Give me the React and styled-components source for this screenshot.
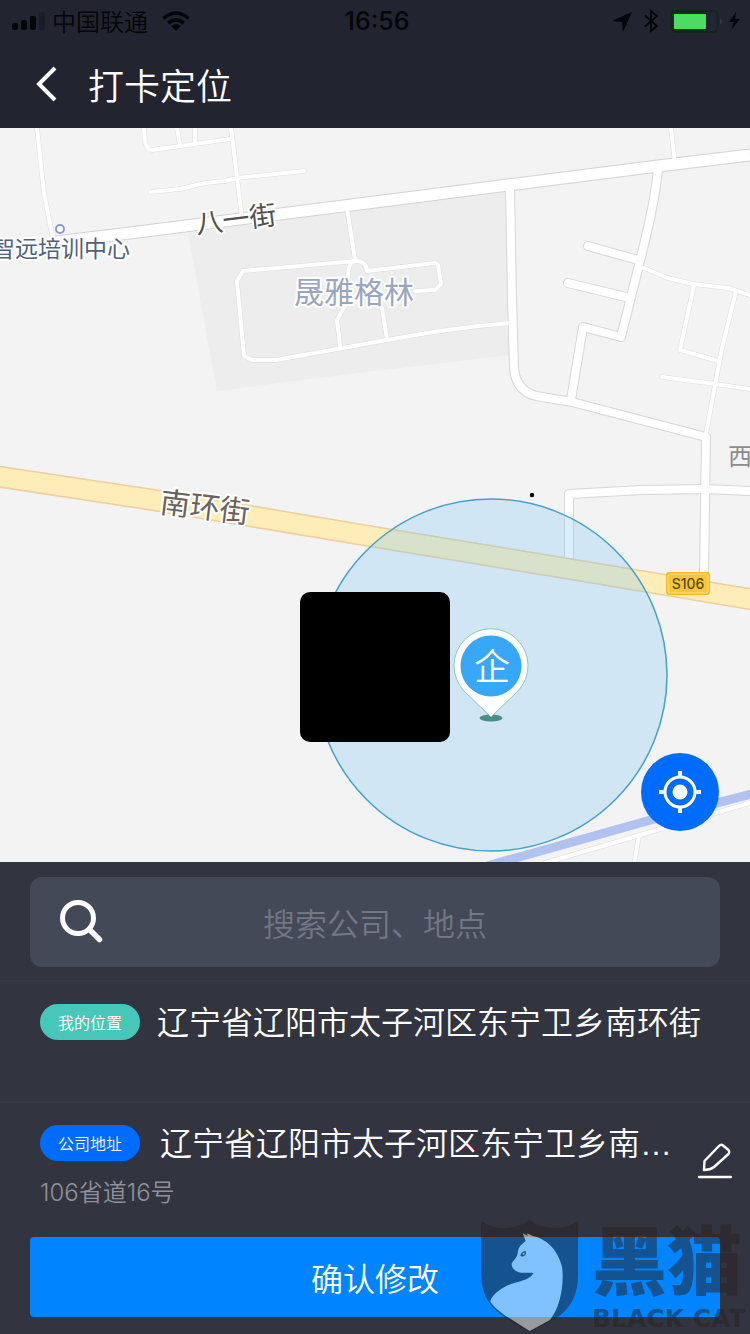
import React from "react";
import styled, { createGlobalStyle } from "styled-components";

const GlobalStyle = createGlobalStyle`
  * { box-sizing: border-box; }
  body {
    margin: 0;
    background: #323440;
    color: #fff;
    font-family: "Noto Sans CJK SC", sans-serif;
    font-weight: 350;
  }
  button, input { font: inherit; color: inherit; }
`;

const Page = styled.div`
  position: relative;
  display: flex;
  flex-direction: column;
  min-height: 100vh;
  overflow: hidden;
`;

const Header = styled.header`
  background: #22242f;
`;

const StatusBar = styled.div`
  display: grid;
  grid-template-columns: 1fr auto 1fr;
  align-items: center;
  height: 40px;
  padding: 0 8px 0 12px;
  color: #05060a;
`;

const StatusGroup = styled.div`
  display: flex;
  align-items: center;
  justify-content: ${(p) => (p.$end ? "flex-end" : "flex-start")};
  gap: 6px;
`;

const Carrier = styled.span`
  font-size: 24px;
  line-height: 40px;
  margin-right: 8px;
`;

const Time = styled.time`
  font-family: Inter, sans-serif;
  font-size: 25px;
  font-weight: 500;
  line-height: 42px;
`;

const NavBar = styled.nav`
  display: flex;
  align-items: center;
  gap: 28px;
  height: 88px;
  padding: 0 34px;
`;

const IconButton = styled.button`
  display: flex;
  padding: 0;
  border: 0;
  background: none;
  cursor: pointer;
`;

const Title = styled.h1`
  margin: 0;
  font-size: 36px;
  line-height: 52px;
  font-weight: 350;
`;

const MapArea = styled.main`
  position: relative;
  background: #f3f3f3;
  overflow: hidden;
`;

const MapCanvas = styled.svg`
  display: block;
  width: 100%;
  height: auto;
`;

const LocateButton = styled.button`
  position: absolute;
  right: 31px;
  bottom: 31px;
  display: flex;
  align-items: center;
  justify-content: center;
  width: 78px;
  height: 78px;
  padding: 0;
  border: 0;
  border-radius: 50%;
  background: #006cff;
  cursor: pointer;
`;

const SearchSection = styled.form`
  padding: 15px 30px 13px;
`;

const SearchField = styled.label`
  display: flex;
  align-items: center;
  height: 90px;
  padding: 0 30px;
  border-radius: 12px;
  background: #434956;
`;

const SearchInput = styled.input`
  flex: 1;
  min-width: 0;
  height: 60px;
  margin-right: 44px;
  padding: 0;
  border: 0;
  outline: 0;
  background: none;
  font-size: 32px;
  text-align: center;
  &::placeholder { color: #737783; opacity: 1; }
`;

const LocationRow = styled.section`
  display: flex;
  align-items: center;
  height: 121px;
  padding: 0 18px 0 40px;
  border-top: 2px solid #363943;
`;

const LocationBody = styled.div`
  flex: 1;
  min-width: 0;
  height: 84px;
`;

const LocationLine = styled.div`
  display: flex;
  align-items: center;
  gap: ${(p) => p.$gap}px;
  height: 44px;
`;

const Badge = styled.span`
  flex: none;
  width: 100px;
  height: 36px;
  border-radius: 18px;
  background: ${(p) => p.$color};
  font-size: 16px;
  line-height: 36px;
  text-align: center;
`;

const Address = styled.span`
  min-width: 0;
  height: 44px;
  overflow: hidden;
  font-family: "Liberation Sans", "Noto Sans CJK SC", sans-serif;
  font-size: 32px;
  line-height: 46px;
  white-space: nowrap;
  text-overflow: ellipsis;
`;

const Detail = styled.p`
  margin: 10px 0 0;
  color: #90929a;
  font-family: Inter, "Noto Sans CJK SC", sans-serif;
  font-size: 24px;
  line-height: 36px;
`;

const EditButton = styled(IconButton)`
  align-self: flex-end;
  margin: 0 0 43px 24px;
`;

const Actions = styled.footer`
  padding: 15px 30px 17px;
`;

const ConfirmButton = styled.button`
  display: block;
  width: 100%;
  height: 80px;
  padding: 0;
  border: 0;
  border-radius: 4px;
  background: #0084ff;
  font-size: 32px;
  cursor: pointer;
`;

const Watermark = styled.div`
  position: absolute;
  right: 0;
  bottom: 2px;
  display: flex;
  align-items: flex-end;
  gap: 14px;
  pointer-events: none;
`;

const WatermarkText = styled.div`
  width: 158px;
  color: rgba(40, 32, 33, 0.5);
  white-space: nowrap;
`;

const WatermarkName = styled.div`
  font-size: 75px;
  font-weight: 900;
  line-height: 98px;
`;

const WatermarkLatin = styled.div`
  font-family: "DejaVu Sans", sans-serif;
  font-size: 25px;
  font-weight: 700;
  line-height: 26px;
`;

const MapLabel = styled.text`
  font-size: ${(p) => p.$size}px;
  font-weight: ${(p) => p.$weight || 400};
  fill: ${(p) => p.$color};
  stroke: ${(p) => (p.$halo ? "#fff" : "none")};
  stroke-width: 4px;
  stroke-linejoin: round;
  paint-order: stroke;
  text-anchor: middle;
`;

const RouteNumber = styled(MapLabel)`
  font-family: Inter, sans-serif;
`;

const lanes = [
  "M37 0 L44 65 L52 106",
  "M144 0 L145 14 Q147 22 152 22 L230 11",
  "M177 0 L180 17",
  "M195 0 L195 15",
  "M231 0 L242 90",
  "M150 64 L180 61 L205 55 L225 53 L237 50 L304 43",
  "M347 80 L355 132",
  "M348 150 Q348 133 356 133 Q366 133 367 143 L435 135 L438 137 L441 156 L435 162 L415 163",
  "M356 133 L243 143 L237 153 L244 228 L252 232 L276 232 L387 212 Q450 200 510 195",
  "M345 178 L337 192 L340 217",
  "M382 180 L387 211",
  "M671 0 L675 35",
  "M641 139 L668 150 L693 156 L728 160 L750 167",
  "M694 157 L680 222 L718 233",
  "M736 163 L722 220 L715 257 L706 306",
  "M662 249 L715 256 L750 261",
  "M545 735 L640 707 L750 675",
  "M639 708 L634 736",
];

const streets = [
  "M510 60 L512 170 L514 240 Q516 266 542 269 L572 274 L706 309 L704 445",
  "M658 40 Q656 70 640 133 L621 209 L583 199 L571 272",
  "M588 118 L638 132",
  "M568 155 L630 170",
  "M569 432 L569 366 L642 362 L705 361 L750 363",
];

const avenue = "M56 114 L130 105 L375 74 L508 57 L650 39 L750 27";
const highway = "M-5 348 L160 373 L375 409 L570 441 L755 472";

const shieldOutline =
  "M0 3 Q30 24 66 25 Q115 24 145 0 Q175 24 225 24 Q263 23 291 3 V165 Q291 245 235 288 Q190 314 146 336 Q75 300 35 262 Q0 222 0 160 Z";
const catOutline =
  "M125 39 L134 63 C116 77 111 84 110 101 C105 119 91 125 92 134 C94 148 104 152 113 157 C127 160 142 157 157 159 C148 181 112 183 80 196 C50 211 31 229 28 245 C50 278 100 302 146 333 L207 300 C239 260 250 190 243 140 C230 88 195 56 155 48 L138 40 L140 48 Z";

function Roads({ paths, width, color }) {
  return (
    <g fill="none" stroke={color} strokeWidth={width} strokeLinejoin="round" strokeLinecap="round">
      {paths.map((d) => (
        <path key={d} d={d} />
      ))}
    </g>
  );
}

function CityMap() {
  return (
    <MapCanvas viewBox="0 0 750 734" role="img" aria-label="地图">
      <path d="M188 105 L217 263 L375 243 L510 227 L507 60 Z" fill="#ededed" />
      <path d="M487 738 L647 693 L755 665" stroke="#b1c1f0" strokeWidth="9" fill="none" />
      <Roads paths={lanes} width={5} color="#dfdddf" />
      <Roads paths={streets} width={10} color="#d8d6d8" />
      <path d={avenue} fill="none" stroke="#d4d2d4" strokeWidth="13" />
      <Roads paths={lanes} width={4} color="#fff" />
      <Roads paths={streets} width={8} color="#fff" />
      <path d={avenue} fill="none" stroke="#fff" strokeWidth="11" />
      <path d={highway} fill="none" stroke="#ecd09c" strokeWidth="22" />
      <path d={highway} fill="none" stroke="#feedb8" strokeWidth="19" />

      <MapLabel $size={27} $color="#505050" $halo x="236" y="101" transform="rotate(-7 236 91)">八一街</MapLabel>
      <MapLabel $size={30} $color="#6a625c" $halo x="205" y="390" transform="rotate(7 205 379)">南环街</MapLabel>
      <MapLabel $size={30} $color="#9aa5bf" $halo x="354" y="175">晟雅格林</MapLabel>
      <MapLabel $size={23} $color="#50607a" $halo x="61" y="129">智远培训中心</MapLabel>
      <MapLabel $size={24} $color="#8c8c8c" x="740" y="337">西</MapLabel>
      <circle cx="60" cy="101" r="4" fill="#fff" stroke="#8c9ac8" strokeWidth="2" />

      <rect x="666" y="444" width="44" height="23" rx="3" fill="#efbd2c" />
      <rect x="668" y="446" width="40" height="19" rx="2" fill="#f5c736" stroke="#fbe08a" />
      <RouteNumber $size={14} $weight={500} $color="#5a4a18" x="688" y="461">S106</RouteNumber>

      <circle cx="491" cy="547" r="176" fill="rgba(103,191,251,0.25)" stroke="#45a0cc" strokeWidth="1.5" />
      <circle cx="532" cy="367" r="2.2" fill="#000" />
      <rect x="300" y="464" width="150" height="150" rx="10" fill="#000" />

      <ellipse cx="491" cy="590" rx="11.5" ry="3.5" fill="#4b8c87" />
      <path d="M491 589 L464 563 A37 37 0 1 1 518 563 Z" fill="#fcfffd" stroke="#8fc8bd" strokeWidth="1" />
      <circle cx="491" cy="538" r="30.5" fill="#38a7f8" />
      <MapLabel $size={36} $weight={350} $color="#fff" x="492" y="552">企</MapLabel>
    </MapCanvas>
  );
}

function SignalIcon() {
  return (
    <svg width="34" height="20" viewBox="0 0 34 20" fill="currentColor" aria-hidden="true">
      <rect x="0" y="12" width="6" height="7" rx="2" />
      <rect x="9" y="9" width="6" height="10" rx="2" />
      <rect x="18" y="5" width="6" height="14" rx="2" />
      <rect x="27" y="1" width="6" height="18" rx="2" opacity="0.25" />
    </svg>
  );
}

function WifiIcon() {
  return (
    <svg width="28" height="20" viewBox="0 0 28 20" fill="none" stroke="currentColor" strokeWidth="3.6" aria-hidden="true">
      <path d="M1.5 7.5 Q14 -3.5 26.5 7.5" />
      <path d="M6.2 12.2 Q14 5.4 21.8 12.2" />
      <path d="M9.2 15.2 Q14 11 18.8 15.2 L14 20 Z" fill="currentColor" stroke="none" />
    </svg>
  );
}

function StatusIcons() {
  return (
    <svg width="130" height="24" viewBox="612 8 130 24" fill="none" aria-hidden="true">
      <path d="M612 20 L632 11 L623 31 L622 21 Z" fill="currentColor" />
      <path d="M645 14.5 L657 25 L651 30 V10 L657 15 L645 25.5" stroke="currentColor" strokeWidth="1.8" />
      <rect x="671.5" y="10" width="46" height="21" rx="4" stroke="#10261c" strokeWidth="2" />
      <rect x="674" y="13" width="32" height="15" rx="1" fill="#4cdb63" />
      <path d="M720 17 Q724 20.5 720 24 Z" fill="#343640" />
      <path d="M736 11 L729 21 H734 L731 29 L740 18 H735 Z" fill="currentColor" />
    </svg>
  );
}

function BackIcon() {
  return (
    <svg width="26" height="36" viewBox="0 0 26 36" fill="none" stroke="#fff" strokeWidth="4" aria-hidden="true">
      <path d="M21 2 L5 18 L21 34" />
    </svg>
  );
}

function TargetIcon() {
  return (
    <svg width="42" height="42" viewBox="0 0 42 42" fill="none" stroke="#fff" aria-hidden="true">
      <circle cx="21" cy="21" r="15" strokeWidth="3" />
      <circle cx="21" cy="21" r="7.5" fill="#fff" stroke="none" />
      <path d="M21 0 V6 M21 36 V42 M0 21 H6 M36 21 H42" strokeWidth="4" />
    </svg>
  );
}

function SearchIcon() {
  return (
    <svg width="44" height="44" viewBox="0 0 44 44" fill="none" stroke="#fff" strokeLinecap="round" aria-hidden="true">
      <circle cx="18" cy="18" r="15.5" strokeWidth="5" />
      <path d="M30 30 L39.5 39.5" strokeWidth="5.5" />
    </svg>
  );
}

function EditIcon() {
  return (
    <svg width="34" height="36" viewBox="0 0 34 36" fill="none" stroke="#fff" strokeWidth="2.4" strokeLinecap="round" strokeLinejoin="round" aria-hidden="true">
      <path d="M6 27 L6.5 18 L21 3 Q23 1 25 2.5 L30.5 7 Q32 9 30.5 11 L16 24 Q12 27 6 27 Z" />
      <path d="M1 34 H33" />
    </svg>
  );
}

function CatShield() {
  return (
    <svg width="97" height="112" viewBox="0 0 291 336" aria-hidden="true">
      <path d={`${shieldOutline} ${catOutline}`} fillRule="evenodd" fill="rgba(40,32,33,0.5)" />
      <path d={catOutline} fill="rgba(255,255,255,0.5)" />
      <path d="M118 107 Q121 93 134 93 Q139 108 123 110 Z" fill="#285987" />
      <circle cx="128" cy="101" r="3" fill="#80c1ff" />
    </svg>
  );
}

export default function App() {
  return (
    <Page>
      <GlobalStyle />
      <Header>
        <StatusBar>
          <StatusGroup>
            <SignalIcon />
            <Carrier>中国联通</Carrier>
            <WifiIcon />
          </StatusGroup>
          <Time>16:56</Time>
          <StatusGroup $end>
            <StatusIcons />
          </StatusGroup>
        </StatusBar>
        <NavBar>
          <IconButton type="button" aria-label="返回">
            <BackIcon />
          </IconButton>
          <Title>打卡定位</Title>
        </NavBar>
      </Header>

      <MapArea>
        <CityMap />
        <LocateButton type="button" aria-label="定位">
          <TargetIcon />
        </LocateButton>
      </MapArea>

      <SearchSection role="search">
        <SearchField>
          <SearchIcon />
          <SearchInput type="text" aria-label="搜索公司、地点" placeholder="搜索公司、地点" />
        </SearchField>
      </SearchSection>

      <LocationRow>
        <LocationBody>
          <LocationLine $gap={17}>
            <Badge $color="#47c7b9">我的位置</Badge>
            <Address>辽宁省辽阳市太子河区东宁卫乡南环街</Address>
          </LocationLine>
        </LocationBody>
      </LocationRow>

      <LocationRow>
        <LocationBody>
          <LocationLine $gap={20}>
            <Badge $color="#006cff">公司地址</Badge>
            <Address>辽宁省辽阳市太子河区东宁卫乡南环街</Address>
          </LocationLine>
          <Detail>106省道16号</Detail>
        </LocationBody>
        <EditButton type="button" aria-label="编辑公司地址">
          <EditIcon />
        </EditButton>
      </LocationRow>

      <Actions>
        <ConfirmButton type="button">确认修改</ConfirmButton>
      </Actions>

      <Watermark>
        <CatShield />
        <WatermarkText>
          <WatermarkName>黑猫</WatermarkName>
          <WatermarkLatin>BLACK CAT</WatermarkLatin>
        </WatermarkText>
      </Watermark>
    </Page>
  );
}
